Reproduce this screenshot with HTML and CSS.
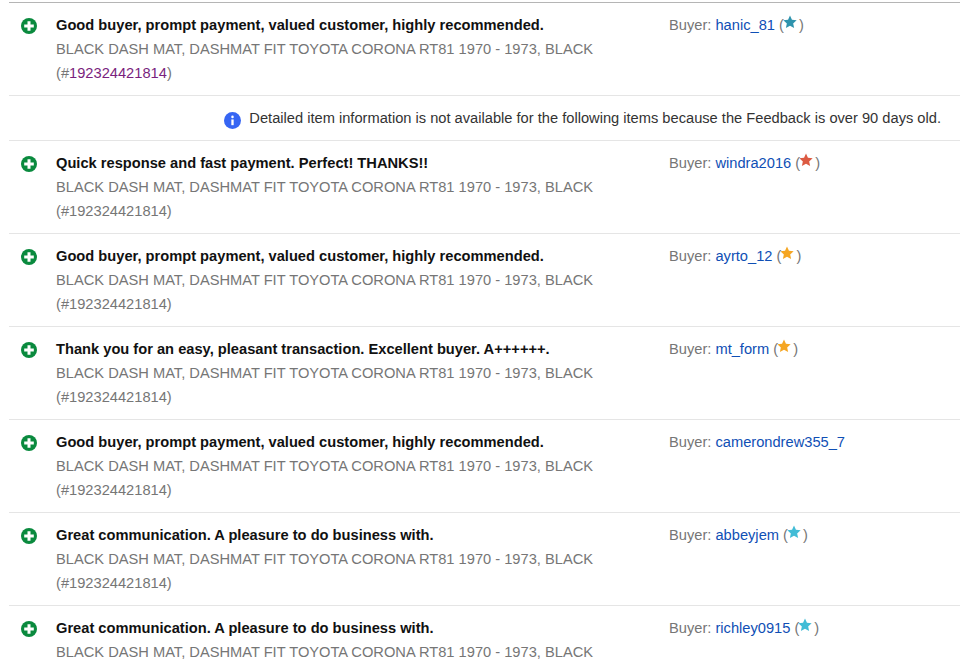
FILE: index.html
```html
<!DOCTYPE html>
<html>
    <head>
        <meta charset="utf-8">
        <title>Feedback</title>
        <link rel="stylesheet" href="styles.css">
    </head>
    <body>
        <svg class="defs" width="0" height="0">
            <symbol id="plus" viewBox="0 0 16 16">
                <circle cx="8" cy="8" r="8" fill="#0a8a3e"/>
                <path d="M8 3.2v9.6M3.2 8h9.6" stroke="#fff" stroke-width="3" fill="none"/>
            </symbol>
            <symbol id="star" viewBox="0 0 16 16">
                <path d="M8 .5l2.23 4.93 5.37.6-3.99 3.64 1.09 5.3L8 12.3l-4.7 2.67 1.09-5.3L.4 6.03l5.37-.6z"/>
            </symbol>
        </svg>
        <div class="wrapper">
            <div class="row">
                <svg class="plus"><use href="#plus"/></svg>
                <div class="item">
                    <div class="comment">Good buyer, prompt payment, valued customer, highly recommended.</div>
                    <div class="desc">BLACK DASH MAT, DASHMAT FIT TOYOTA CORONA RT81 1970 - 1973, BLACK (#<a class="visited">192324421814</a>)</div>
                </div>
                <div class="buyer">Buyer: <a>hanic_81</a> (<svg class="star teal"><use href="#star"/></svg>)</div>
            </div>
            <div class="notice">
                <svg class="info" viewBox="0 0 16 16">
                    <circle cx="8" cy="8" r="8" fill="#3665f3"/>
                    <circle cx="8" cy="4.6" r="1.2" fill="#fff"/>
                    <path d="M8 7v5.4" stroke="#fff" stroke-width="2.2"/>
                </svg>
                <span>Detailed item information is not available for the following items because the Feedback is over 90 days old.</span>
            </div>
            <div class="row">
                <svg class="plus"><use href="#plus"/></svg>
                <div class="item">
                    <div class="comment">Quick response and fast payment. Perfect! THANKS!!</div>
                    <div class="desc">BLACK DASH MAT, DASHMAT FIT TOYOTA CORONA RT81 1970 - 1973, BLACK (#192324421814)</div>
                </div>
                <div class="buyer">Buyer: <a>windra2016</a> (<svg class="star red"><use href="#star"/></svg>)</div>
            </div>
            <div class="row">
                <svg class="plus"><use href="#plus"/></svg>
                <div class="item">
                    <div class="comment">Good buyer, prompt payment, valued customer, highly recommended.</div>
                    <div class="desc">BLACK DASH MAT, DASHMAT FIT TOYOTA CORONA RT81 1970 - 1973, BLACK (#192324421814)</div>
                </div>
                <div class="buyer">Buyer: <a>ayrto_12</a> (<svg class="star orange"><use href="#star"/></svg>)</div>
            </div>
            <div class="row">
                <svg class="plus"><use href="#plus"/></svg>
                <div class="item">
                    <div class="comment">Thank you for an easy, pleasant transaction. Excellent buyer. A++++++.</div>
                    <div class="desc">BLACK DASH MAT, DASHMAT FIT TOYOTA CORONA RT81 1970 - 1973, BLACK (#192324421814)</div>
                </div>
                <div class="buyer">Buyer: <a>mt_form</a> (<svg class="star orange"><use href="#star"/></svg>)</div>
            </div>
            <div class="row">
                <svg class="plus"><use href="#plus"/></svg>
                <div class="item">
                    <div class="comment">Good buyer, prompt payment, valued customer, highly recommended.</div>
                    <div class="desc">BLACK DASH MAT, DASHMAT FIT TOYOTA CORONA RT81 1970 - 1973, BLACK (#192324421814)</div>
                </div>
                <div class="buyer">Buyer: <a>camerondrew355_7</a></div>
            </div>
            <div class="row">
                <svg class="plus"><use href="#plus"/></svg>
                <div class="item">
                    <div class="comment">Great communication. A pleasure to do business with.</div>
                    <div class="desc">BLACK DASH MAT, DASHMAT FIT TOYOTA CORONA RT81 1970 - 1973, BLACK (#192324421814)</div>
                </div>
                <div class="buyer">Buyer: <a>abbeyjem</a> (<svg class="star cyan"><use href="#star"/></svg>)</div>
            </div>
            <div class="row">
                <svg class="plus"><use href="#plus"/></svg>
                <div class="item">
                    <div class="comment">Great communication. A pleasure to do business with.</div>
                    <div class="desc">BLACK DASH MAT, DASHMAT FIT TOYOTA CORONA RT81 1970 - 1973, BLACK (#192324421814)</div>
                </div>
                <div class="buyer">Buyer: <a>richley0915</a> (<svg class="star cyan"><use href="#star"/></svg>)</div>
            </div>
        </div>
    </body>
</html>
```
FILE: styles.css
```css
:root {
    --c-line: #e5e5e5;
    --c-grey: #767676;
    --c-link: #0f4fb5;
}
html, body {
    margin: 0;
    padding: 0;
    height: 669px;
    overflow: hidden;
    background-color: #fff;
}
body {
    font-family: "Liberation Sans", Arial, sans-serif;
    font-size: 14.66px;
    line-height: 24px;
    color: var(--c-grey);
}
.defs {
    display: block;
}
.wrapper {
    margin: 2px 0 0 9px;
    border-top: 1px solid #b5b5b5;
}
.row {
    display: grid;
    grid-template-columns: 47px 613px 1fr;
    box-sizing: border-box;
    height: 93px;
    padding-top: 10px;
    border-bottom: 1px solid var(--c-line);
}
.plus {
    width: 16px;
    height: 16px;
    margin: 5px 0 0 12px;
}
.comment {
    font-weight: bold;
    color: #111;
}
.desc {
    padding-right: 20px;
}
.visited {
    color: #7a1f7e;
}
.buyer a {
    color: var(--c-link);
}
.star {
    width: 14px;
    height: 14px;
    margin: 0 2px 0 -1px;
    position: relative;
    top: -4px;
    vertical-align: middle;
}
.teal { fill: #2e93ad; }
.red { fill: #dc5a42; }
.orange { fill: #f5a623; }
.cyan { fill: #41bcd6; }
.notice {
    display: flex;
    justify-content: flex-end;
    align-items: center;
    box-sizing: border-box;
    height: 45px;
    padding: 0 19px 0 0;
    color: #333;
    border-bottom: 1px solid var(--c-line);
}
.info {
    width: 17px;
    height: 17px;
    margin: 4px 8px 0 0;
}
```
